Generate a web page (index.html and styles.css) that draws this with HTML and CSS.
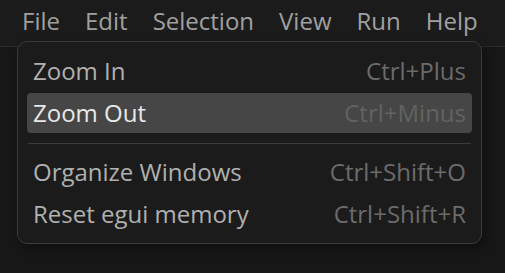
FILE: index.html
```html
<!DOCTYPE html>
<html lang="en">
<head>
<meta charset="utf-8">
<title>Menu</title>
<link rel="stylesheet" href="styles.css">
</head>
<body>
<div class="app">
  <nav class="menubar">
    <span class="menu-title">File</span>
    <span class="menu-title">Edit</span>
    <span class="menu-title">Selection</span>
    <span class="menu-title">View</span>
    <span class="menu-title">Run</span>
    <span class="menu-title">Help</span>
  </nav>
  <main class="workspace"></main>
  <div class="popup">
    <div class="item"><span class="label">Zoom In</span><span class="shortcut">Ctrl+Plus</span></div>
    <div class="item hovered"><span class="label">Zoom Out</span><span class="shortcut">Ctrl+Minus</span></div>
    <div class="separator"></div>
    <div class="item"><span class="label">Organize Windows</span><span class="shortcut">Ctrl+Shift+O</span></div>
    <div class="item"><span class="label">Reset egui memory</span><span class="shortcut">Ctrl+Shift+R</span></div>
  </div>
</div>
</body>
</html>
```
FILE: styles.css
```css
html, body {
  margin: 0;
  padding: 0;
  background: #171717;
  width: 505px;
  height: 273px;
  overflow: hidden;
}

.app {
  position: relative;
  width: 505px;
  height: 273px;
  font-family: "Open Sans", "Noto Sans", sans-serif;
  font-size: 24px;
}

.menubar {
  display: flex;
  gap: 25px;
  box-sizing: border-box;
  height: 47px;
  padding: 5px 0 0 22px;
  background: #1b1b1b;
  border-bottom: 1px solid #2b2b2b;
}

.menu-title {
  line-height: 32px;
  color: #a0a0a0;
}

.workspace {
  height: 226px;
  background: #171717;
}

.popup {
  position: absolute;
  left: 17px;
  top: 41px;
  width: 465px;
  box-sizing: border-box;
  padding: 9px;
  background: #1b1b1b;
  border: 1px solid #3b3b3b;
  border-radius: 10px;
  box-shadow: 3px 5px 10px rgba(0, 0, 0, 0.35);
  display: flex;
  flex-direction: column;
  gap: 2px;
}

.item {
  display: flex;
  justify-content: space-between;
  align-items: center;
  height: 40px;
  line-height: 40px;
  padding: 0 6px;
  border-radius: 4px;
}

.label {
  color: #b0b0b0;
}

.shortcut {
  color: #6b6b6b;
}

.item.hovered {
  background: #464646;
}

.item.hovered .label {
  color: #e8e8e8;
}

.item.hovered .shortcut {
  color: #626262;
}

.separator {
  height: 1px;
  margin: 8px 1px 6px;
  background: #3c3c3c;
}
```
